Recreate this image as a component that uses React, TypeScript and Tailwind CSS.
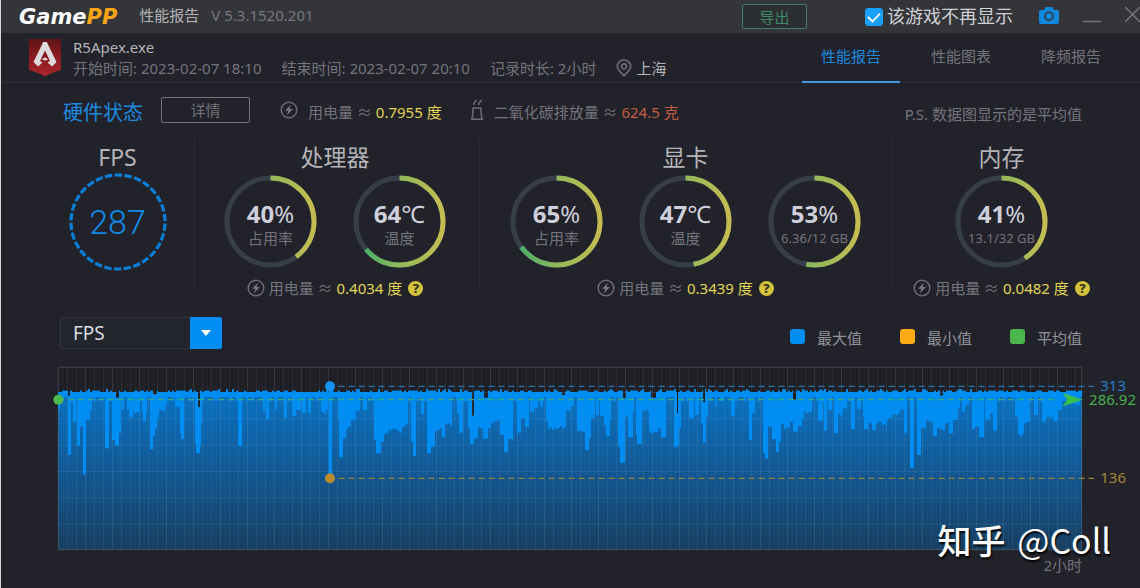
import type { ReactNode } from "react";

type Run = [from: number, to: number, depth: number];

/* Frame-rate dips in three consecutive segments of the recording. */
const SEGMENTS: { start: number; runs: Run[] }[] = [
  {
    start: -54,
    runs: [
      [54, 60, 178], [83, 93, 315], [93, 98, 155], [98, 108, 215], [110, 119, 287], [119, 129, 230], [129, 138, 373],
      [139, 148, 210], [148, 156, 180], [194, 206, 295], [217, 227, 270], [226, 237, 287], [235, 243, 250], [246, 251, 180],
      [260, 268, 178], [268, 278, 202], [278, 300, 193], [305, 319, 190], [309, 316, 215], [329, 339, 298], [336, 344, 258],
      [342, 349, 235], [349, 355, 205], [358, 364, 180], [367, 374, 182], [374, 381, 165], [405, 418, 172], [419, 430, 250],
      [424, 431, 268], [466, 482, 290], [469, 478, 310], [482, 486, 220], [595, 606, 288], [668, 675, 182], [678, 687, 208],
      [704, 711, 178], [733, 740, 205], [757, 767, 197], [768, 783, 190], [787, 797, 188], [804, 813, 188], [842, 864, 192],
      [866, 876, 385], [895, 901, 210], [898, 909, 322], [907, 917, 265], [915, 933, 240], [933, 946, 210], [948, 960, 182],
      [970, 980, 180], [1003, 1015, 270], [1009, 1021, 310], [1020, 1030, 275], [1030, 1045, 258], [1045, 1080, 246],
    ],
  },
  {
    start: 1026,
    runs: [
      [0, 5, 248], [5, 22, 232], [32, 40, 275], [38, 48, 318], [62, 72, 193], [82, 93, 310], [90, 104, 290], [104, 112, 243],
      [113, 133, 240], [125, 134, 262], [133, 155, 228], [172, 180, 190], [178, 187, 248], [205, 212, 235], [210, 222, 282],
      [220, 232, 265], [232, 250, 242], [250, 262, 266], [262, 272, 235], [272, 290, 222], [290, 304, 210], [300, 312, 255],
      [312, 324, 307], [322, 338, 278], [350, 362, 248], [362, 376, 205], [374, 386, 230], [390, 400, 185], [400, 412, 175],
      [420, 428, 170], [437, 446, 215], [445, 490, 240], [488, 496, 232], [496, 512, 188], [512, 520, 168], [532, 545, 243],
      [545, 558, 245], [556, 567, 300], [565, 573, 265], [571, 583, 205], [588, 596, 195], [601, 610, 198], [612, 619, 225],
      [617, 628, 258], [626, 632, 210], [655, 662, 290], [661, 674, 338], [675, 684, 200], [684, 697, 262], [697, 702, 185],
      [708, 716, 255], [712, 724, 282], [727, 748, 190], [748, 772, 250], [772, 783, 235], [783, 797, 262], [822, 837, 293],
      [835, 842, 235], [866, 880, 205], [886, 896, 195], [902, 908, 220], [908, 918, 278], [918, 922, 200], [945, 951, 168],
      [993, 1005, 198], [1046, 1056, 270], [1056, 1064, 190],
    ],
  },
  {
    start: 2106,
    runs: [
      [8, 14, 310], [14, 24, 325], [22, 36, 230], [36, 48, 268], [48, 57, 305], [57, 63, 275], [63, 72, 222], [72, 88, 240],
      [88, 99, 215], [99, 112, 245], [112, 124, 228], [124, 132, 205], [132, 154, 195], [175, 187, 212], [192, 201, 242],
      [205, 215, 180], [222, 232, 250], [232, 247, 200], [247, 260, 175], [273, 283, 237], [290, 303, 178], [308, 315, 200],
      [313, 323, 237], [323, 337, 220], [337, 347, 240], [347, 365, 222], [365, 380, 230], [380, 395, 212], [395, 418, 200],
      [418, 430, 178], [432, 441, 248], [449, 460, 353], [471, 483, 315], [483, 497, 235], [497, 520, 215], [520, 530, 258],
      [530, 553, 245], [553, 568, 222], [568, 579, 250], [579, 592, 210], [592, 600, 175], [605, 614, 185], [614, 626, 165],
      [636, 645, 238], [645, 658, 230], [658, 670, 262], [675, 690, 215], [690, 700, 190], [700, 710, 242], [765, 775, 200],
      [774, 792, 262], [792, 800, 220], [800, 810, 215], [822, 834, 195], [845, 858, 215], [858, 880, 205], [880, 893, 213],
      [893, 906, 180], [930, 960, 165],
    ],
  },
];

/* Places where even the upper edge of the curve drops. */
const NOTCHES: Run[] = [
  [30, 36, 86], [174, 182, 92], [284, 296, 82], [420, 425, 120], [1241, 1246, 146], [1278, 1288, 92], [1512, 1520, 84],
  [1694, 1702, 94], [1780, 1794, 92], [1856, 1860, 138], [1934, 1940, 106], [2204, 2212, 98], [2646, 2654, 86],
];

const noise = (n: number) => {
  const v = Math.sin(n * 127.1) * 43758.5453;
  return v - Math.floor(v);
};

function wavePath() {
  const top: string[] = [];
  const bottom: string[] = [];
  for (let x = 0; x < 3072; x += 3) {
    const i = Math.floor(x / 6);
    let peak = noise(i) > 0.9 ? 67 : noise(i) > 0.5 ? 71 : 75;
    for (const [from, to, depth] of NOTCHES) if (x + 1 >= from && x + 1 <= to) peak = depth;
    let low = noise(i + 900) > 0.6 ? 102 : 90;
    for (const { start, runs } of SEGMENTS)
      for (const [from, to, depth] of runs) {
        if (x + 1 >= from + start && x + 1 <= to + start) {
          low = Math.max(low, depth - 51 - (to - from > 14 ? Math.round(noise(i + 50) * 12) : 0));
        }
      }
    low = Math.max(low, peak);
    top.push(`${x},${peak} ${x + 3},${peak}`);
    bottom.unshift(`${x + 3},${low} ${x},${low}`);
  }
  return { top: top.join(" "), band: `${top.join(" ")} ${bottom.join(" ")}` };
}

const WAVE = wavePath();
const COLUMNS = Array.from({ length: 113 }, (_, i) => 27 * (i + 1));
const ROWS = [75, 154, 233, 312, 391, 470];

function FpsChart() {
  return (
    <svg viewBox="0 0 3108 549" preserveAspectRatio="none" className="block h-[183px] w-full overflow-visible" aria-label="FPS 曲线">
      <defs>
        <linearGradient id="area" x1="0" y1="0" x2="0" y2="1">
          <stop offset="0" stopColor="#0873c4" />
          <stop offset="0.45" stopColor="#115b99" />
          <stop offset="1" stopColor="#173f61" />
        </linearGradient>
      </defs>
      <rect x="0" y="0" width="3072" height="549" fill="#1f1f26" />
      <polygon points={`${WAVE.top} 3072,549 0,549`} fill="url(#area)" />
      {COLUMNS.map((x, i) => (
        <g key={x}>
          <rect x={x} y="0" width="3" height="549" fill="#a9bdd0" opacity={i % 3 === 2 ? 0.15 : 0.1} />
          <rect x={x - 12} y="0" width="3" height="549" fill="#a9bdd0" opacity="0.03" />
        </g>
      ))}
      {ROWS.map((y) => (
        <rect key={y} x="0" y={y} width="3072" height="3" fill="#5aa0dd" opacity="0.2" />
      ))}
      <rect x="1" y="1" width="3070" height="547" fill="none" stroke="#7b8088" strokeWidth="3" opacity="0.35" />
      <polygon points={WAVE.band} fill="#018df1" />
      <rect x="812" y="60" width="9" height="270" fill="#018df1" />
      <path d="M842 58H3108" stroke="#2a86d0" strokeWidth="3" strokeDasharray="18 12" />
      <path d="M0 98H3000" stroke="#3aa878" strokeWidth="4" strokeDasharray="18 12" />
      <path d="M842 334H3108" stroke="#9a8338" strokeWidth="4" strokeDasharray="18 12" />
      <circle cx="816" cy="58" r="15" fill="#1593f0" />
      <circle cx="816" cy="334" r="15" fill="#b98b2c" />
      <circle cx="1" cy="98" r="15" fill="#4dba4b" />
      <path d="M3014 78L3074 98L3014 118L3028 98Z" fill="#3cc04c" />
    </svg>
  );
}

function BoltIcon() {
  return (
    <svg viewBox="0 0 18 18" className="size-[18px] shrink-0" aria-hidden="true">
      <circle cx="9" cy="9" r="7.8" fill="none" stroke="#6c6c75" strokeWidth="1.5" />
      <path d="M10.8 3.8L5 9.8h3.2L7 14.2l6-6.2H9.6z" fill="#777780" />
    </svg>
  );
}

function ChimneyIcon() {
  return (
    <svg viewBox="0 0 14 22" className="h-[22px] w-3.5 shrink-0" fill="none" stroke="#6c6c75" strokeWidth="1.6" aria-hidden="true">
      <path d="M2.300 9h9.400M3.200 9L2.200 20M10.800 9l1 11M0.800 20.200h12.400M3.800 6V4.500l2.600-3.500M8.800 6V4.500L11.400 1" />
    </svg>
  );
}

function PinIcon() {
  return (
    <svg viewBox="0 0 16 18" className="h-[18px] w-4 shrink-0" fill="none" stroke="#6c6c75" strokeWidth="1.7" aria-hidden="true">
      <path d="M8 16.800C4.500 13.500 1.300 10.600 1.300 7.300a6.700 6.300 0 0 1 13.400 0c0 3.300-3.200 6.200-6.700 9.500z" />
      <circle cx="8" cy="7.300" r="2.500" />
    </svg>
  );
}

function ApexIcon() {
  return (
    <svg viewBox="0 0 34 40" className="h-10 w-[34px] shrink-0" aria-hidden="true">
      <defs>
        <linearGradient id="shield" x1="0" y1="0" x2="0" y2="1">
          <stop offset="0" stopColor="#5f1518" />
          <stop offset="0.500" stopColor="#8d1b20" />
          <stop offset="1" stopColor="#a8262b" />
        </linearGradient>
      </defs>
      <path d="M1 1h32v31c-5 2-11 3-16 6.500C12 35 6 34 1 32z" fill="url(#shield)" />
      <path d="M15.200 4h3.600l9.700 20-4.500 4.500-4.500-4 2.500-1.500L17 12.500 12 23l2.500 1.500-4.500 4L5.500 24z" fill="#ded9da" />
      <path d="M13.800 21.500l3.200-2.300 3.200 2.300-3.200 1z" fill="#ded9da" />
    </svg>
  );
}

function CameraIcon() {
  return (
    <svg viewBox="0 0 20 17" className="h-[17px] w-5" aria-hidden="true">
      <path d="M6.500 0h7l1.500 3h3a2 2 0 0 1 2 2v10a2 2 0 0 1-2 2H2a2 2 0 0 1-2-2V5a2 2 0 0 1 2-2h3z" fill="#1088e0" />
      <circle cx="10" cy="9.300" r="4" fill="none" stroke="#2f4358" strokeWidth="2" />
    </svg>
  );
}

function Power({ value }: { value: string }) {
  return (
    <div className="flex h-5 items-center justify-center gap-1 text-[15px] leading-5 whitespace-nowrap">
      <BoltIcon />
      <span className="text-[#74747d]">
        用电量 ≈ <span className="text-[#e3d557]">{value} 度</span>
      </span>
      <button type="button" aria-label="说明" className="ml-0.5 size-[15px] shrink-0 rounded-full bg-[#d3c33c] text-center text-[13px] leading-[15px] font-extrabold text-[#3a3414]">
        ?
      </button>
    </div>
  );
}

function Ring({ id, percent, value, unit, label, small }: { id: string; percent: number; value: string; unit: string; label: string; small?: boolean }) {
  return (
    <div className="grid size-[93px] place-items-center">
      <svg viewBox="0 0 94 94" className="col-start-1 row-start-1 size-full" aria-hidden="true">
        <defs>
          <linearGradient id={id} gradientUnits="userSpaceOnUse" x1="47" y1="94" x2="47" y2="0">
            <stop offset="0" stopColor="#c9bd50" />
            <stop offset="0.500" stopColor="#90b95a" />
            <stop offset="1" stopColor="#35aa6c" />
          </linearGradient>
        </defs>
        <circle cx="47" cy="47" r="44" fill="none" stroke="#363e4a" strokeWidth="5" />
        <circle cx="47" cy="47" r="44" fill="none" stroke={`url(#${id})`} strokeWidth="5" pathLength={100} strokeDasharray={`${percent} 100`} transform="rotate(-90 47 47)" />
      </svg>
      <div className="col-start-1 row-start-1 pt-1 text-center whitespace-nowrap">
        <div className="text-[24px] leading-7 text-[#cfd0dc]">
          <span className="font-bold">{value}</span>
          {unit}
        </div>
        <div className={small ? "text-[13px] leading-5 text-[#74747d]" : "text-[15px] leading-5 text-[#74747d]"}>{label}</div>
      </div>
    </div>
  );
}

function Panel({ title, power, className = "", children }: { title: string; power?: string; className?: string; children: ReactNode }) {
  return (
    <section className={`border-l border-[#2b2b33] first:border-transparent ${className}`}>
      <h2 className="pt-1 pb-0.5 text-center text-[23px] leading-8 text-[#b4b4b8]">{title}</h2>
      <div className="flex h-[93px] items-center justify-center gap-9">{children}</div>
      <div className="h-[23px] pt-2.5">{power && <Power value={power} />}</div>
    </section>
  );
}

function Legend({ swatch, children }: { swatch: string; children: ReactNode }) {
  return (
    <li className="flex items-center gap-3">
      <span className={`size-[15px] rounded-[3px] ${swatch}`} />
      <span className="pt-1">{children}</span>
    </li>
  );
}

export default function App() {
  return (
    <main className="relative min-h-screen border-l border-[#d8d8d8] bg-[#22222a] font-['Noto_Sans','Noto_Sans_CJK_SC',sans-serif] text-[15px] text-[#74747d]">
      <header className="flex h-[33px] items-center bg-[#343539] pl-[18px] whitespace-nowrap">
        <div className="font-['DejaVu_Sans',sans-serif] text-[21px] leading-6 font-bold text-white italic">
          Game<span className="text-[#f7a416]">PP</span>
        </div>
        <h1 className="ml-[22px] pb-1 text-[15px] leading-6 text-[#b4b4b8]">性能报告</h1>
        <span className="ml-3 pb-1 leading-6 text-[#777780]">V 5.3.1520.201</span>
        <button type="button" className="mr-[58px] ml-auto h-[25px] w-[65px] rounded-xs border border-[#3f7c62] bg-[#2b2f33] leading-5 text-[#3f8a66]">导出</button>
        <label className="flex items-center gap-1 text-[18px] leading-6 text-[#d0d0d6]">
          <span className="grid size-[18px] place-items-center">
            <input type="checkbox" defaultChecked className="peer col-start-1 row-start-1 size-[18px] appearance-none rounded-[3px] border border-[#18a0fb] checked:bg-[#18a0fb]" />
            <svg viewBox="0 0 18 18" className="pointer-events-none invisible col-start-1 row-start-1 size-[18px] peer-checked:visible" fill="none" stroke="#fff" strokeWidth="1.800" aria-hidden="true">
              <path d="M3 9l4.500 4.500L15 5.500" />
            </svg>
          </span>
          <span className="pb-0.5">该游戏不再显示</span>
        </label>
        <button type="button" aria-label="截图" className="ml-[26px] pb-0.5"><CameraIcon /></button>
        <button type="button" aria-label="最小化" className="ml-6">
          <svg viewBox="0 0 18 18" className="size-[18px]" stroke="#74757b" strokeWidth="1.500"><path d="M0 13.500h18" /></svg>
        </button>
        <button type="button" aria-label="关闭" className="ml-6 pb-1">
          <svg viewBox="0 0 15 15" className="size-[15px]" stroke="#74757b" strokeWidth="1.500"><path d="M0 0l15 15M15 0L0 15" /></svg>
        </button>
      </header>

      <div className="flex h-[50px] border-b border-[#2d2d35] pr-[14px] pl-[27px] whitespace-nowrap">
        <div className="flex items-center"><ApexIcon /></div>
        <div className="ml-[11px] pt-1">
          <div className="leading-5 text-[#b4b4b8]">R5Apex.exe</div>
          <div className="flex items-center gap-5 leading-[22px]">
            <span>开始时间: 2023-02-07 18:10</span>
            <span>结束时间: 2023-02-07 20:10</span>
            <span>记录时长: 2小时</span>
            <span className="flex items-center gap-1 text-[#b4b4b8]"><PinIcon />上海</span>
          </div>
        </div>
        <nav className="ml-auto flex">
          <a href="#report" className="flex w-[110px] justify-center text-[#1b8be0]">
            <span className="h-[50px] w-[98px] border-b-2 border-[#3d9bdc] text-center leading-[46px]">性能报告</span>
          </a>
          <a href="#charts" className="w-[110px] text-center leading-[46px]">性能图表</a>
          <a href="#throttle" className="w-[110px] text-center leading-[46px]">降频报告</a>
        </nav>
      </div>

      <div className="flex h-[54px] items-center pr-[58px] pl-[62px] whitespace-nowrap">
        <h2 className="pt-1.5 text-[20px] leading-7 text-[#1b8be0]">硬件状态</h2>
        <button type="button" className="ml-[18px] h-[26px] w-[89px] rounded-xs border border-[#74747d] leading-6">详情</button>
        <div className="ml-[30px] flex items-center gap-2.5">
          <BoltIcon />
          <span className="pt-1 leading-6">用电量 ≈ <span className="text-[#e3d557]">0.7955 度</span></span>
        </div>
        <div className="ml-7 flex items-center gap-2.5">
          <ChimneyIcon />
          <span className="pt-1 leading-6">二氧化碳排放量 ≈ <span className="text-[#c85c40]">624.5 克</span></span>
        </div>
        <span className="ml-auto pt-2 leading-6">P.S. 数据图显示的是平均值</span>
      </div>

      <div className="grid grid-cols-[154fr_285fr_412fr_220fr] pr-[29px] pl-[39px]">
        <Panel title="FPS">
          <div className="grid size-[98px] shrink-0 place-items-center">
            <svg viewBox="0 0 98 98" className="col-start-1 row-start-1 size-full" aria-hidden="true">
              <circle cx="49" cy="49" r="47" fill="none" stroke="#0b7fd8" strokeWidth="3.200" pathLength={300} strokeDasharray="7.500 2.500" transform="rotate(-94 49 49)" />
            </svg>
            <span className="col-start-1 row-start-1 font-['Roboto',sans-serif] text-[34px] leading-10 font-light text-[#108be8]">287</span>
          </div>
        </Panel>
        <Panel title="处理器" power="0.4034" className="pr-1">
          <Ring id="cpu-load" percent={40} value="40" unit="%" label="占用率" />
          <Ring id="cpu-temp" percent={64} value="64" unit="℃" label="温度" />
        </Panel>
        <Panel title="显卡" power="0.3439">
          <Ring id="gpu-load" percent={65} value="65" unit="%" label="占用率" />
          <Ring id="gpu-temp" percent={47} value="47" unit="℃" label="温度" />
          <Ring id="gpu-mem" percent={53} value="53" unit="%" label="6.36/12 GB" small />
        </Panel>
        <Panel title="内存" power="0.0482">
          <Ring id="ram" percent={41} value="41" unit="%" label="13.1/32 GB" small />
        </Panel>
      </div>

      <div className="mt-[26px] flex h-8 items-center justify-between pr-[58px] pl-[59px]">
        <div className="grid w-[162px] grid-cols-[1fr_32px]">
          <select aria-label="指标" defaultValue="FPS" className="col-span-2 col-start-1 row-start-1 h-8 appearance-none rounded-xs border border-[#32333b] bg-[#22252c] pl-3 text-[19px] leading-7 text-[#dcdce0]">
            <option>FPS</option>
          </select>
          <span className="pointer-events-none col-start-2 row-start-1 grid place-items-center rounded-r-xs bg-[#018df1]">
            <svg viewBox="0 0 10 6" className="h-1.5 w-2.5" aria-hidden="true"><path d="M0 0h10L5 6z" fill="#fff" /></svg>
          </span>
        </div>
        <ul className="flex gap-[38px] pt-1.5 leading-6 text-[#92929a]">
          <Legend swatch="bg-[#018df1]">最大值</Legend>
          <Legend swatch="bg-[#fcab15]">最小值</Legend>
          <Legend swatch="bg-[#4cb54c]">平均值</Legend>
        </ul>
      </div>

      <div className="relative mt-[18px] pr-[46px] pl-[57px]">
        <FpsChart />
        <span className="absolute top-[11px] right-[14px] leading-[14px] text-[#237fc6]">313</span>
        <span className="absolute top-[25px] right-1 leading-[14px] text-[#45b04c]">286.92</span>
        <span className="absolute top-[103px] right-[14px] leading-[14px] text-[#a98735]">136</span>
        <p className="pt-1.5 pr-3 text-right leading-[18px]">2小时</p>
        <p className="absolute right-[29px] bottom-[18px] font-['Noto_Sans_CJK_SC',sans-serif] text-[34px] leading-8 font-medium whitespace-nowrap text-white [text-shadow:1px_2px_2px_#000]">
          知乎 <span className="ml-1 font-normal">@Coll</span>
        </p>
      </div>
    </main>
  );
}
